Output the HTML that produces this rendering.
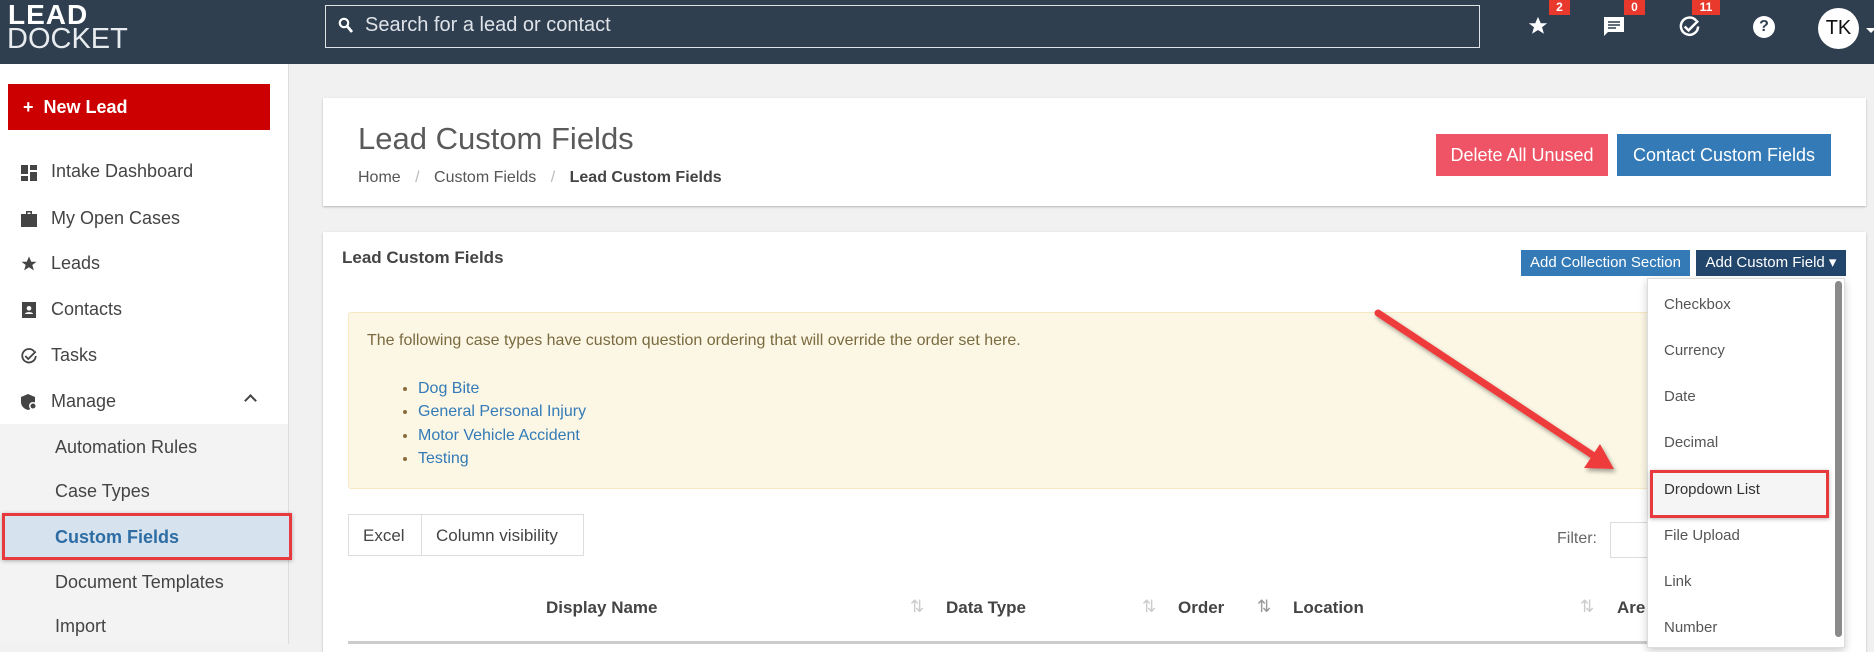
<!DOCTYPE html>
<html><head><meta charset="utf-8"><style>
*{box-sizing:border-box;margin:0;padding:0}
body{width:1874px;height:644px;overflow:hidden;background:#f1f1f1;font-family:"Liberation Sans",sans-serif;position:relative;color:#555}
.abs{position:absolute}
#hdr{left:0;top:0;width:1874px;height:64px;background:#2f3f50}
#side{left:0;top:64px;width:289px;height:580px;background:#fff;border-right:1px solid #ddd}
.nav{position:absolute;left:51px;font-size:18px;color:#444}
.ico{position:absolute;left:20px;width:18px;height:18px;fill:#444}
.sub{position:absolute;left:55px;font-size:18px;color:#444}
.badge{position:absolute;top:0;height:15px;background:#e8392c;color:#fff;font-size:12px;font-weight:bold;text-align:center;line-height:14px}
.card{position:absolute;background:#fff;box-shadow:0 1px 2px rgba(0,0,0,.25)}
.dd{position:absolute;left:1664px;font-size:15px;color:#555}
</style></head><body>
<div id="hdr" class="abs"></div>
<div class="abs" style="left:8px;top:1px;color:#fff;font-size:28px;font-weight:bold;letter-spacing:1px;line-height:28px">LEAD</div>
<div class="abs" style="left:7px;top:25px;color:#e8ecef;font-size:29px;line-height:29px">DOCKET</div>
<div class="abs" style="left:325px;top:5px;width:1155px;height:43px;border:1px solid #dfe3e8"></div>
<svg class="abs" style="left:338px;top:17px" width="16" height="18" viewBox="0 0 16 18"><circle cx="6" cy="6" r="4.2" fill="none" stroke="#fff" stroke-width="2.2"/><path d="M9 9l5 6" stroke="#fff" stroke-width="2.8"/></svg>
<div class="abs" style="left:365px;top:14px;font-size:20px;color:#dfe3e8">Search for a lead or contact</div>
<svg class="abs" style="left:1527px;top:15px" width="22" height="22" viewBox="0 0 24 24"><path fill="#fff" d="M12 2l3 7h7l-5.6 4.3 2.1 7.2L12 16.3 5.5 20.5l2.1-7.2L2 9h7z"/></svg>
<div class="badge" style="left:1549px;width:21px">2</div>
<svg class="abs" style="left:1603px;top:16px" width="22" height="22" viewBox="0 0 22 22"><path fill="#fff" d="M1 1h20v15H5l-4 4z"/><path d="M5 6h12M5 9h12M5 12h8" stroke="#2f3f50" stroke-width="1.5"/></svg>
<div class="badge" style="left:1624px;width:21px">0</div>
<svg class="abs" style="left:1678px;top:15px" width="23" height="23" viewBox="0 0 24 24"><path d="M19 6A9 9 0 1 0 21 12" fill="none" stroke="#fff" stroke-width="2.6"/><path d="M7 12l4 4 10-10" fill="none" stroke="#fff" stroke-width="2.6"/></svg>
<div class="badge" style="left:1692px;width:28px">11</div>
<div class="abs" style="left:1753px;top:16px;width:22px;height:22px;border-radius:50%;background:#fff;color:#2f3f50;font-weight:bold;font-size:16px;text-align:center;line-height:22px">?</div>
<div class="abs" style="left:1818px;top:8px;width:41px;height:41px;border-radius:50%;background:#fff;color:#111;font-size:20px;text-align:center;line-height:41px">TK</div>
<div class="abs" style="left:1866px;top:28px;border:5px solid transparent;border-top-color:#fff"></div>

<div id="side" class="abs"></div>
<div class="abs" style="left:8px;top:84px;width:262px;height:46px;background:#cc0000;color:#fff;font-size:18px;font-weight:bold;line-height:46px;padding-left:15px">+&nbsp; New Lead</div>
<svg class="ico" style="top:164px" viewBox="0 0 18 18"><path d="M1 1h7v9H1zM10 1h7v5h-7zM10 8h7v9h-7zM1 12h7v5H1z"/></svg>
<div class="nav" style="top:161px">Intake Dashboard</div>
<svg class="ico" style="top:210px" viewBox="0 0 18 18"><path d="M6 1h6v3h5v13H1V4h5zM7.5 2.5v1.5h3V2.5z"/></svg>
<div class="nav" style="top:208px">My Open Cases</div>
<svg class="ico" style="top:255px" viewBox="0 0 24 24"><path d="M12 2l3 7h7l-5.6 4.3 2.1 7.2L12 16.3 5.5 20.5l2.1-7.2L2 9h7z"/></svg>
<div class="nav" style="top:253px">Leads</div>
<svg class="ico" style="top:301px" viewBox="0 0 18 18"><path d="M2 1h14v16H2zM9 5a2.3 2.3 0 1 0 .01 0zM5 13c0-2.5 8-2.5 8 0z" fill-rule="evenodd"/></svg>
<div class="nav" style="top:299px">Contacts</div>
<svg class="ico" style="top:347px" viewBox="0 0 24 24"><path d="M19 6A9 9 0 1 0 21 12" fill="none" stroke="#444" stroke-width="2.4"/><path d="M7 12l4 4 10-10" fill="none" stroke="#444" stroke-width="2.4"/></svg>
<div class="nav" style="top:345px">Tasks</div>
<svg class="ico" style="top:393px" viewBox="0 0 18 18"><path d="M8 1l7 3v5c0 4-3 7-7 8-4-1-7-4-7-8V4z"/><circle cx="13" cy="13" r="4" fill="#fff"/><circle cx="13" cy="13" r="2.5"/></svg>
<div class="nav" style="top:391px">Manage</div>
<div class="abs" style="left:246px;top:396px;width:9px;height:9px;border-left:2px solid #444;border-top:2px solid #444;transform:rotate(45deg)"></div>
<div class="abs" style="left:0;top:424px;width:288px;height:220px;background:#f3f3f3"></div>
<div class="sub" style="top:437px">Automation Rules</div>
<div class="sub" style="top:481px">Case Types</div>
<div class="abs" style="left:2px;top:513px;width:290px;height:47px;background:#d6e2ee;border:3px solid #e8393f;box-shadow:0 1px 4px rgba(0,0,0,.3)"></div>
<div class="sub" style="top:527px;color:#2e6da4;font-weight:bold">Custom Fields</div>
<div class="sub" style="top:572px">Document Templates</div>
<div class="sub" style="top:616px">Import</div>

<div class="card" style="left:323px;top:98px;width:1543px;height:108px"></div>
<div class="abs" style="left:358px;top:121px;font-size:31px;color:#5a5a5a">Lead Custom Fields</div>
<div class="abs" style="left:358px;top:169px;font-size:16px;color:#555">Home <span style="color:#bbb;margin:0 10px">/</span> Custom Fields <span style="color:#bbb;margin:0 10px">/</span> <b style="color:#444">Lead Custom Fields</b></div>
<div class="abs" style="left:1436px;top:134px;width:172px;height:42px;background:#ee5465;color:#fff;font-size:18px;text-align:center;line-height:42px">Delete All Unused</div>
<div class="abs" style="left:1617px;top:134px;width:214px;height:42px;background:#337ab7;color:#fff;font-size:18px;text-align:center;line-height:42px">Contact Custom Fields</div>

<div class="card" style="left:323px;top:232px;width:1543px;height:420px"></div>
<div class="abs" style="left:342px;top:248px;font-size:17px;font-weight:bold;color:#444">Lead Custom Fields</div>
<div class="abs" style="left:1521px;top:250px;width:169px;height:26px;background:#337ab7;color:#fff;font-size:15px;text-align:center;line-height:26px">Add Collection Section</div>
<div class="abs" style="left:1696px;top:250px;width:150px;height:26px;background:#22466b;color:#fff;font-size:15px;text-align:center;line-height:26px">Add Custom Field ▾</div>
<div class="abs" style="left:348px;top:312px;width:1320px;height:177px;background:#fcf7e4;border:1px solid #f8e8c3;border-radius:3px"></div>
<div class="abs" style="left:367px;top:332px;font-size:16px;color:#7a6a40">The following case types have custom question ordering that will override the order set here.</div>
<ul class="abs" style="left:418px;top:377px;font-size:16px;line-height:23.3px;color:#8a6d3b;list-style:disc">
<li><span style="color:#337ab7">Dog Bite</span></li><li><span style="color:#337ab7">General Personal Injury</span></li><li><span style="color:#337ab7">Motor Vehicle Accident</span></li><li><span style="color:#337ab7">Testing</span></li></ul>
<div class="abs" style="left:348px;top:514px;width:236px;height:42px;border:1px solid #ddd;background:#fff"></div>
<div class="abs" style="left:421px;top:514px;width:1px;height:42px;background:#ddd"></div>
<div class="abs" style="left:363px;top:526px;font-size:17px;color:#444">Excel</div>
<div class="abs" style="left:436px;top:526px;font-size:17px;color:#444">Column visibility</div>
<div class="abs" style="left:1557px;top:530px;font-size:16px;color:#666">Filter:</div>
<div class="abs" style="left:1610px;top:522px;width:60px;height:36px;border:1px solid #ddd"></div>
<div class="abs" style="left:546px;top:598px;font-size:17px;font-weight:bold;color:#444">Display Name</div>
<div class="abs" style="left:910px;top:597px;font-size:17px;color:#ccc">⇅</div>
<div class="abs" style="left:946px;top:598px;font-size:17px;font-weight:bold;color:#444">Data Type</div>
<div class="abs" style="left:1142px;top:597px;font-size:17px;color:#ccc">⇅</div>
<div class="abs" style="left:1178px;top:598px;font-size:17px;font-weight:bold;color:#444">Order</div>
<div class="abs" style="left:1257px;top:597px;font-size:17px;color:#999">⇅</div>
<div class="abs" style="left:1293px;top:598px;font-size:17px;font-weight:bold;color:#444">Location</div>
<div class="abs" style="left:1580px;top:597px;font-size:17px;color:#ccc">⇅</div>
<div class="abs" style="left:1617px;top:598px;font-size:17px;font-weight:bold;color:#444">Are</div>
<div class="abs" style="left:348px;top:641px;width:1320px;height:3px;background:#ccc"></div>

<svg class="abs" style="left:0;top:0" width="1874" height="644"><defs><filter id="sh"><feDropShadow dx="2" dy="3" stdDeviation="2" flood-opacity=".35"/></filter></defs>
<g filter="url(#sh)"><path d="M1378 313L1597 458" stroke="#ee3b3b" stroke-width="7" stroke-linecap="round"/><path d="M1614 469L1584 468L1600 444Z" fill="#ee3b3b"/></g></svg>

<div class="abs" style="left:1647px;top:278px;width:198px;height:370px;background:#fff;border:1px solid #ddd;box-shadow:0 3px 8px rgba(0,0,0,.2)"></div>
<div class="abs" style="left:1835px;top:281px;width:7px;height:356px;background:#8a8a8a;border-radius:4px"></div>
<div class="dd" style="top:296px">Checkbox</div>
<div class="dd" style="top:342px">Currency</div>
<div class="dd" style="top:388px">Date</div>
<div class="dd" style="top:434px">Decimal</div>
<div class="abs" style="left:1650px;top:470px;width:179px;height:48px;background:#f5f5f5;border:3px solid #e8393f;box-shadow:0 1px 4px rgba(0,0,0,.3)"></div>
<div class="dd" style="top:481px;color:#333">Dropdown List</div>
<div class="dd" style="top:527px">File Upload</div>
<div class="dd" style="top:573px">Link</div>
<div class="dd" style="top:619px">Number</div>
</body></html>
